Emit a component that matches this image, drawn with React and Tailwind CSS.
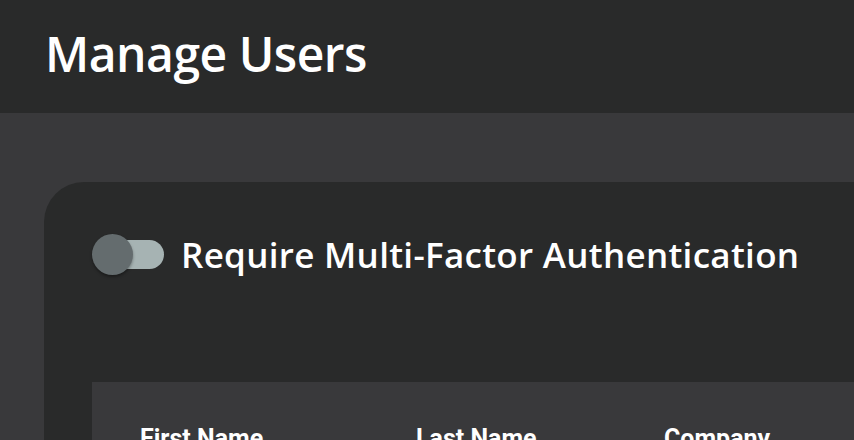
import React from 'react';

const columns = [
  { label: 'First Name', width: 'w-[276px]' },
  { label: 'Last Name', width: 'w-[248px]' },
  { label: 'Company', width: 'w-[248px]' },
];

const App = () => {
  return (
    <div className="w-[854px] h-[440px] overflow-hidden bg-[#39393b] font-['Open_Sans','Noto_Sans',sans-serif] [font-variant-ligatures:none]">
      {/* Header */}
      <header className="h-[113px] bg-[#292a2a] flex items-center pl-[45px] pb-[6px]">
        <h1 className="text-[48px] font-semibold text-white tracking-[-0.5px] leading-none">Manage Users</h1>
      </header>

      {/* Card */}
      <div className="ml-[44px] mt-[69px] w-[900px] h-[400px] bg-[#292a2a] rounded-tl-[40px] pl-[48px] pt-[52px]">
        <div className="flex items-center gap-[17px]">
          <div className="relative w-[72px] h-[41px] flex items-center">
            <div className="absolute left-[4px] right-0 h-[29px] rounded-full bg-[#a6b3b3]"></div>
            <div className="absolute left-0 w-[41px] h-[41px] rounded-full bg-[#646c6e] shadow-[0_2px_3px_rgba(0,0,0,0.35)]"></div>
          </div>
          <span className="text-[35px] font-semibold text-white leading-none tracking-[0.3px]">Require Multi-Factor Authentication</span>
        </div>

        {/* Table */}
        <div className="mt-[107px] bg-[#39393b] pl-[48px] pt-[41px] h-[200px]">
          <div className="flex font-['Roboto',sans-serif] text-[25px] font-bold text-white leading-[32px]">
            {columns.map((c) => (
              <div key={c.label} className={c.width}>{c.label}</div>
            ))}
          </div>
        </div>
      </div>
    </div>
  );
};

export default App;
